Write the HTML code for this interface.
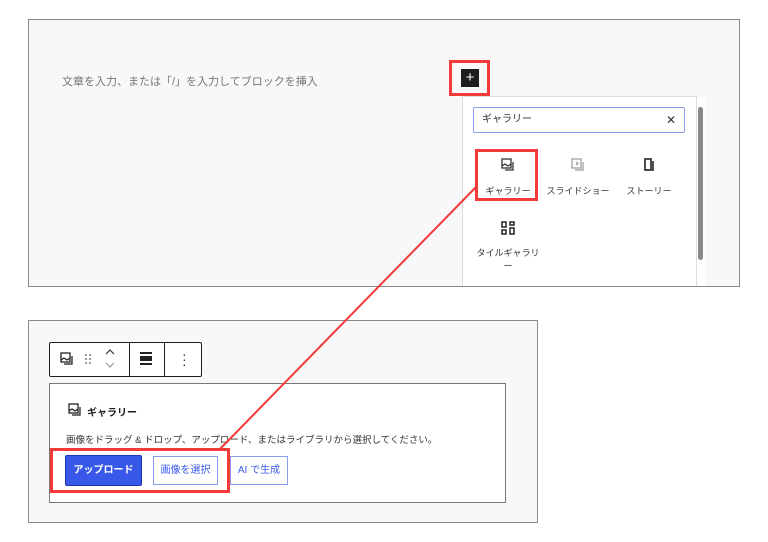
<!DOCTYPE html>
<html><head><meta charset="utf-8"><style>
*{box-sizing:border-box;margin:0;padding:0}
body{width:768px;height:542px;background:#fff;position:relative;overflow:hidden;font-family:"Liberation Sans","Noto Sans CJK JP",sans-serif;color:#1e1e1e}
.abs{position:absolute}
.panel{background:#f8f8f8;border:1px solid #8a8a8a}
.red{border:3px solid #f23a3a}
.lbl{font-size:9px;text-align:center;width:70px;color:#333}
</style></head><body>
<div class="abs panel" style="left:28px;top:19px;width:712px;height:268px"></div>
<div class="abs" style="left:62px;top:73px;font-size:11px;color:#757575">文章を入力、または「/」を入力してブロックを挿入</div>
<div class="abs red" style="left:449px;top:60px;width:41px;height:36px"></div>
<div class="abs" style="left:461px;top:69px;width:18px;height:18px;background:#1e1e1e;color:#fff;font-size:15px;line-height:17px;text-align:center">+</div>
<div class="abs" style="left:462px;top:96px;width:235px;height:190px;background:#fff;border:1px solid #ddd;border-bottom:none"></div>
<div class="abs" style="left:697px;top:99px;width:8px;height:187px;background:#fff"></div>
<div class="abs" style="left:698px;top:107px;width:5px;height:153px;background:#888;border-radius:3px"></div>
<div class="abs" style="left:473px;top:107px;width:212px;height:26px;border:1px solid #8f9ff0;border-radius:2px;font-size:10px;line-height:24px;padding-left:8px;color:#333">ギャラリー<span style="position:absolute;right:8px;font-size:12px">✕</span></div>
<div class="abs red" style="left:475px;top:149px;width:63px;height:52px"></div>
<svg class="abs" style="left:500px;top:157px" width="16" height="16" viewBox="0 0 16 16" fill="none" stroke="#333" stroke-width="1.3"><rect x="2" y="2" width="9" height="9"/><path d="M2 9l3-2 3 2 3-2M13 5v8H5"/></svg>
<svg class="abs" style="left:570px;top:157px" width="16" height="16" viewBox="0 0 16 16" fill="none" stroke="#999" stroke-width="1.2"><rect x="2" y="2" width="9" height="9"/><path d="M6 5l2 1.5L6 8M13 5v8H5"/></svg>
<svg class="abs" style="left:641px;top:157px" width="16" height="16" viewBox="0 0 16 16" fill="none" stroke="#222" stroke-width="1.6"><rect x="4" y="2" width="6" height="11"/><path d="M12 4v10"/></svg>
<div class="abs lbl" style="left:473px;top:184px">ギャラリー</div>
<div class="abs lbl" style="left:543px;top:184px">スライドショー</div>
<div class="abs lbl" style="left:614px;top:184px">ストーリー</div>
<svg class="abs" style="left:500px;top:220px" width="16" height="16" viewBox="0 0 16 16" fill="none" stroke="#222" stroke-width="1.5"><rect x="2" y="2" width="4" height="5"/><rect x="10" y="2" width="4" height="3"/><rect x="2" y="10" width="4" height="4"/><rect x="10" y="8" width="4" height="6"/></svg>
<div class="abs lbl" style="left:473px;top:247px;line-height:13px">タイルギャラリ<br>ー</div>

<div class="abs panel" style="left:28px;top:320px;width:510px;height:203px"></div>
<div class="abs" style="left:49px;top:342px;width:153px;height:35px;background:#fff;border:1px solid #1e1e1e;border-radius:2px"></div>
<div class="abs" style="left:129px;top:342px;width:1px;height:35px;background:#1e1e1e"></div>
<div class="abs" style="left:164px;top:342px;width:1px;height:35px;background:#1e1e1e"></div>
<svg class="abs" style="left:59px;top:351px" width="16" height="16" viewBox="0 0 16 16" fill="none" stroke="#222" stroke-width="1.3"><rect x="2" y="2" width="9" height="9"/><path d="M2 9l3-2 3 2 3-2M13 5v8H5"/></svg>
<svg class="abs" style="left:84px;top:353px" width="8" height="12" viewBox="0 0 8 12" fill="#555"><circle cx="2" cy="2" r="0.9"/><circle cx="6" cy="2" r="0.9"/><circle cx="2" cy="6" r="0.9"/><circle cx="6" cy="6" r="0.9"/><circle cx="2" cy="10" r="0.9"/><circle cx="6" cy="10" r="0.9"/></svg>
<svg class="abs" style="left:104px;top:347px" width="12" height="24" viewBox="0 0 12 24" fill="none" stroke="#333" stroke-width="1.2"><path d="M2 7l4-4 4 4"/><path d="M2 16l4 4 4-4" stroke="#999"/></svg>
<div class="abs" style="left:140px;top:352px;width:12px;height:2px;background:#222"></div>
<div class="abs" style="left:140px;top:356px;width:12px;height:5px;background:#222"></div>
<div class="abs" style="left:140px;top:363px;width:12px;height:2px;background:#222"></div>
<div class="abs" style="left:182px;top:352px;font-size:14px;line-height:5px;color:#333">·<br>·<br>·</div>
<div class="abs" style="left:49px;top:383px;width:457px;height:120px;background:#fff;border:1px solid #777"></div>
<svg class="abs" style="left:67px;top:402px" width="16" height="16" viewBox="0 0 16 16" fill="none" stroke="#222" stroke-width="1.3"><rect x="2" y="2" width="9" height="9"/><path d="M2 9l3-2 3 2 3-2M13 5v8H5"/></svg>
<div class="abs" style="left:87px;top:404px;font-size:10px;font-weight:bold">ギャラリー</div>
<div class="abs" style="left:66px;top:432px;font-size:9.5px;color:#333">画像をドラッグ &amp; ドロップ、アップロード、またはライブラリから選択してください。</div>
<div class="abs" style="left:65px;top:455px;width:77px;height:31px;background:#3858e9;border:1px solid #1d35b4;border-radius:2px;color:#fff;font-size:10px;font-weight:bold;text-align:center;line-height:29px">アップロード</div>
<div class="abs" style="left:153px;top:456px;width:65px;height:29px;border:1px solid #8a9cf0;color:#3858e9;font-size:10px;text-align:center;line-height:27px">画像を選択</div>
<div class="abs" style="left:230px;top:456px;width:58px;height:29px;border:1px solid #8a9cf0;color:#3858e9;font-size:10px;text-align:center;line-height:27px">AI で生成</div>
<div class="abs red" style="left:50px;top:448px;width:180px;height:45px"></div>
<svg class="abs" style="left:0;top:0" width="768" height="542"><line x1="477" y1="186" x2="219" y2="450" stroke="#f23a3a" stroke-width="2"/></svg>
</body></html>
